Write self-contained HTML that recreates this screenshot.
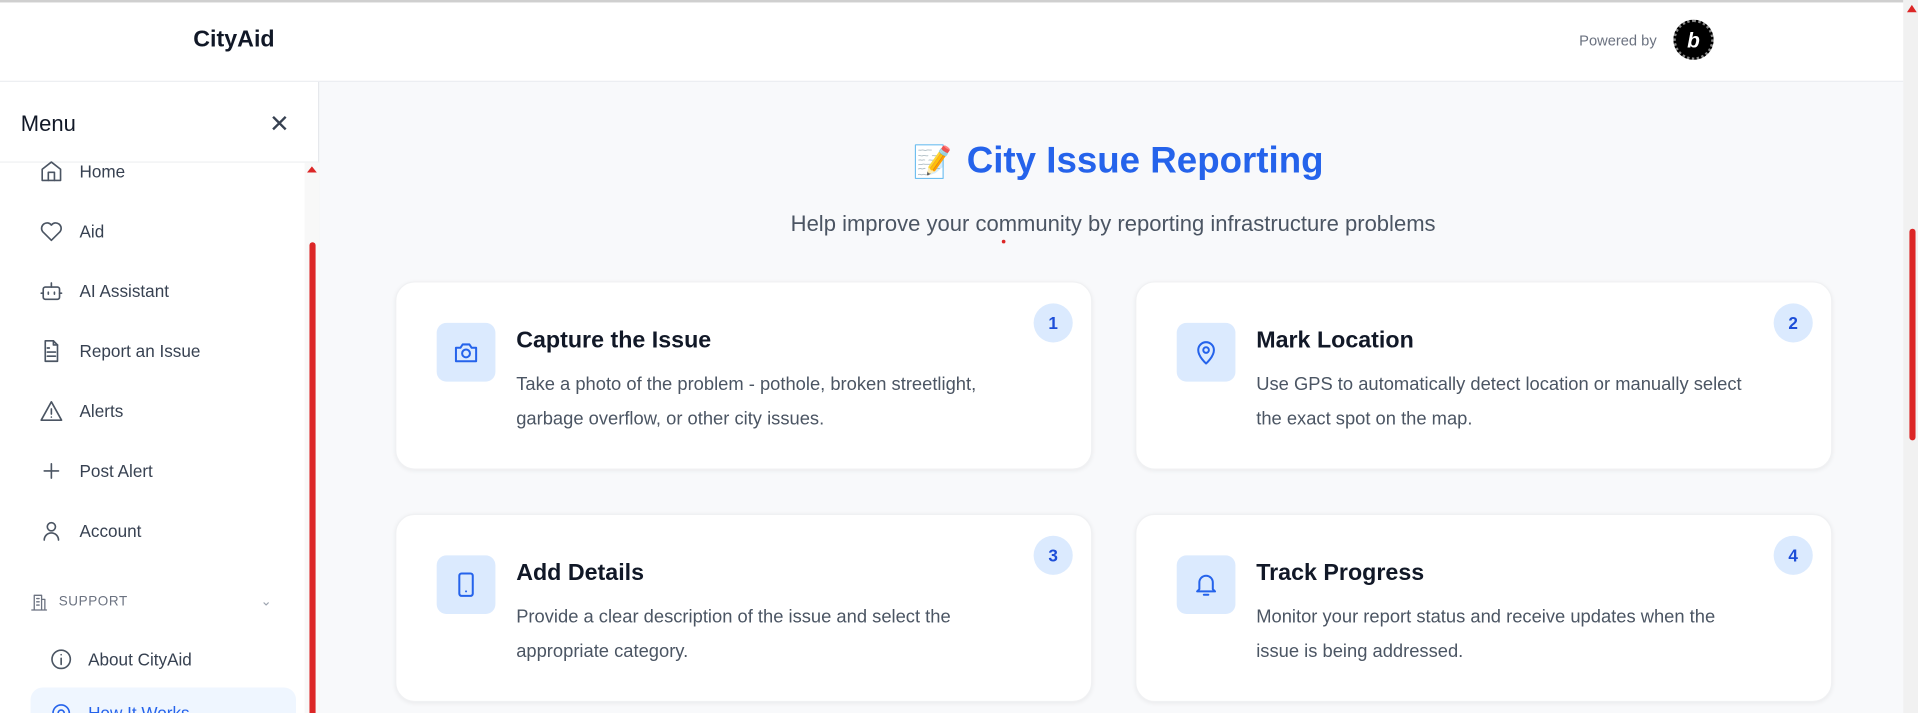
<!DOCTYPE html>
<html><head><meta charset="utf-8"><style>
*{box-sizing:border-box;margin:0;padding:0}
html,body{width:1918px;height:713px;overflow:hidden;background:#f8f9fb;font-family:"Liberation Sans","DejaVu Sans",sans-serif}
#s{position:absolute;left:0;top:0;width:1568px;height:583px;transform:scale(1.2232);transform-origin:0 0;background:#f8f9fb;overflow:hidden}
.hdr{position:absolute;left:0;top:0;width:1556px;height:67px;background:#fff;border-top:2px solid #cfcfcf;border-bottom:1px solid #eceef1}
.logo{position:absolute;left:158px;top:20px;font-size:19px;font-weight:bold;color:#111827}
.pw{position:absolute;left:1291px;top:24px;font-size:12px;color:#6b7280}
.bolt{position:absolute;left:1368px;top:14px;width:33px;height:33px;border-radius:50%;background:#000;color:#fff;font-weight:bold;font-style:italic;font-size:17px;text-align:center;line-height:31px;border:2px dotted #888}
.side{position:absolute;left:0;top:67px;width:261px;height:520px;background:#fff;border-right:1px solid #e5e7eb}
.menu{position:absolute;left:17px;top:24px;font-size:18px;color:#111827}
.x{position:absolute;left:220px;top:22px;font-size:20px;color:#374151}
.sep{position:absolute;left:0;top:65px;width:261px;height:1px;background:#eef0f2}
.it{position:absolute;left:32px;font-size:14px;color:#374151;display:flex;align-items:center;gap:13px}
.it svg{width:20px;height:20px;fill:none;stroke:#4b5563;stroke-width:1.6;stroke-linecap:round;stroke-linejoin:round}
.main-title{position:absolute;left:0;width:1828px;top:115px;text-align:center;font-size:30px;font-weight:bold;color:#2563eb}
.sub{position:absolute;left:0;width:1820px;top:173px;text-align:center;font-size:18px;color:#4b5563}
.card{position:absolute;width:570px;height:154px;background:#fff;border-radius:16px;box-shadow:0 1px 4px rgba(0,0,0,.06);border:1px solid #f0f1f3}
.ib{position:absolute;left:33px;top:33px;width:48px;height:48px;border-radius:8px;background:#dbeafe;display:flex;align-items:center;justify-content:center}
.ib svg{width:22px;height:22px;fill:none;stroke:#2563eb;stroke-width:1.8;stroke-linecap:round;stroke-linejoin:round}
.ct{position:absolute;left:98px;top:37px;font-size:19px;color:#111827;font-weight:600}
.cd{position:absolute;left:98px;top:70px;width:405px;font-size:15px;line-height:28px;color:#4b5563}
.n{position:absolute;left:521px;top:17px;width:32px;height:32px;border-radius:50%;background:#dbeafe;color:#1d4ed8;font-weight:bold;font-size:14px;text-align:center;line-height:32px}
</style></head><body><div id="s">
<div class="hdr"><div class="logo">CityAid</div><div class="pw">Powered by</div><div class="bolt">b</div></div>
<div style="position:absolute;left:1556px;top:0;width:12px;height:583px;background:#f1f1f1"></div>
<div style="position:absolute;left:1561px;top:187px;width:5px;height:173px;background:#dc2626;border-radius:3px"></div>
<div style="position:absolute;left:1559px;top:4px;width:0;height:0;border-left:4px solid transparent;border-right:4px solid transparent;border-bottom:6px solid #dc2626"></div>
<div class="side">
<div class="menu">Menu</div><div class="x">✕</div><div class="sep"></div>
<div style="position:absolute;left:249px;top:66px;width:12px;height:460px;background:#f8f8f8"></div>
<div style="position:absolute;left:253px;top:131px;width:5px;height:400px;background:#dc2626;border-radius:3px"></div>
<div style="position:absolute;left:251px;top:69px;border-left:4px solid transparent;border-right:4px solid transparent;border-bottom:5px solid #dc2626"></div>
<div class="it" style="top:63px"><svg viewBox="0 0 24 24"><path d="M3 10l9-7 9 7v11H3z"/><path d="M9 21v-8h6v8"/></svg>Home</div>
<div class="it" style="top:112px"><svg viewBox="0 0 24 24"><path d="M12 21l-8.5-8.5a5 5 0 0 1 8.5-6.5 5 5 0 0 1 8.5 6.5z"/></svg>Aid</div>
<div class="it" style="top:161px"><svg viewBox="0 0 24 24"><rect x="4" y="8" width="16" height="12" rx="2"/><path d="M12 8V4M2 14h2M20 14h2M9 13v2M15 13v2"/></svg>AI Assistant</div>
<div class="it" style="top:210px"><svg viewBox="0 0 24 24"><path d="M14 2H6v20h12V6z"/><path d="M14 2v4h4M8 13h8M8 17h8M8 9h2"/></svg>Report an Issue</div>
<div class="it" style="top:259px"><svg viewBox="0 0 24 24"><path d="M12 3L2 21h20z"/><path d="M12 10v5M12 18h.01"/></svg>Alerts</div>
<div class="it" style="top:308px"><svg viewBox="0 0 24 24"><path d="M12 5v14M5 12h14"/></svg>Post Alert</div>
<div class="it" style="top:357px"><svg viewBox="0 0 24 24"><circle cx="12" cy="8" r="4"/><path d="M5 21a7 7 0 0 1 14 0"/></svg>Account</div>
<div class="it" style="top:417px;left:24px;font-size:11px;color:#6b7280;letter-spacing:.5px;gap:8px"><svg viewBox="0 0 24 24" style="width:16px;height:16px;stroke:#6b7280"><path d="M6 22V4h9v18M15 9h4v13M3 22h18M9 8h3M9 12h3M9 16h3"/></svg>SUPPORT</div>
<div style="position:absolute;left:213px;top:418px;font-size:11px;color:#9ca3af">⌄</div>
<div class="it" style="top:462px;left:40px;gap:12px"><svg viewBox="0 0 24 24"><circle cx="12" cy="12" r="9"/><path d="M12 11v6M12 7.5h.01"/></svg>About CityAid</div>
<div style="position:absolute;left:25px;top:495px;width:217px;height:40px;border-radius:10px;background:#eff6ff"></div>
<div class="it" style="top:506px;left:40px;color:#2563eb;gap:12px"><svg viewBox="0 0 24 24" style="stroke:#2563eb"><circle cx="12" cy="12" r="3"/><circle cx="12" cy="12" r="8"/></svg>How It Works</div>
</div>
<div class="main-title"><span style="font-size:26px;margin-right:12px">📝</span>City Issue Reporting</div>
<div class="sub">Help improve your community by reporting infrastructure problems</div>
<div style="position:absolute;left:819px;top:196px;width:3px;height:3px;border-radius:50%;background:#dc2626"></div>
<div class="card" style="left:323px;top:230px"><div class="ib"><svg viewBox="0 0 24 24"><path d="M3 8h4l2-3h6l2 3h4v12H3z"/><circle cx="12" cy="13" r="3.5"/></svg></div><div class="ct">Capture the Issue</div><div class="cd">Take a photo of the problem - pothole, broken streetlight, garbage overflow, or other city issues.</div><div class="n">1</div></div>
<div class="card" style="left:928px;top:230px"><div class="ib"><svg viewBox="0 0 24 24"><path d="M12 22s7-6 7-12a7 7 0 0 0-14 0c0 6 7 12 7 12z"/><circle cx="12" cy="10" r="2.5"/></svg></div><div class="ct">Mark Location</div><div class="cd">Use GPS to automatically detect location or manually select the exact spot on the map.</div><div class="n">2</div></div>
<div class="card" style="left:323px;top:420px"><div class="ib"><svg viewBox="0 0 24 24"><rect x="6" y="2" width="12" height="20" rx="2"/><path d="M12 18h.01"/></svg></div><div class="ct">Add Details</div><div class="cd">Provide a clear description of the issue and select the appropriate category.</div><div class="n">3</div></div>
<div class="card" style="left:928px;top:420px"><div class="ib"><svg viewBox="0 0 24 24"><path d="M6 16V10a6 6 0 0 1 12 0v6l2 2H4z"/><path d="M10 21h4"/></svg></div><div class="ct">Track Progress</div><div class="cd">Monitor your report status and receive updates when the issue is being addressed.</div><div class="n">4</div></div>
</div></body></html>
